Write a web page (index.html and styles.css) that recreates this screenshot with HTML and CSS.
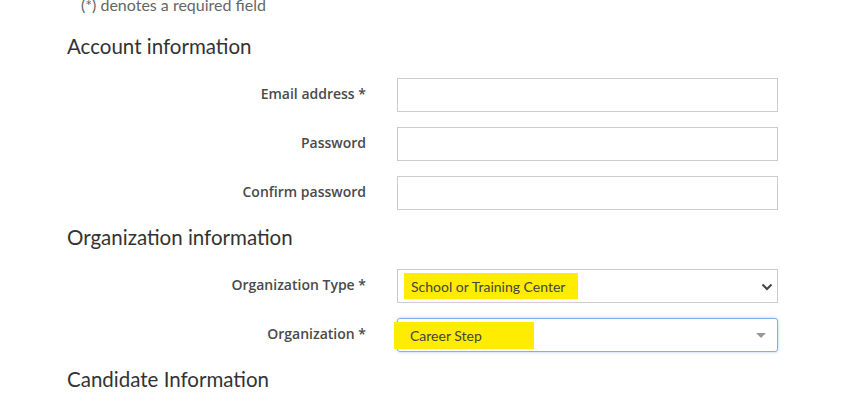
FILE: index.html
```html
<!DOCTYPE html>
<html>
<head>
<meta charset="utf-8">
<link rel="stylesheet" href="styles.css">
</head>
<body>
<div class="page">
  <p class="note">(*) denotes a required field</p>
  <h2 class="section-title">Account information</h2>
  <div class="row"><label class="label">Email address *</label><div class="field"><input class="input" type="text"></div></div>
  <div class="row"><label class="label">Password</label><div class="field"><input class="input" type="password"></div></div>
  <div class="row"><label class="label">Confirm password</label><div class="field"><input class="input" type="password"></div></div>
  <h2 class="section-title org">Organization information</h2>
  <div class="row"><label class="label">Organization Type *</label>
    <div class="field">
      <div class="select">
        <span class="hl hl-type">School or Training Center</span>
        <svg class="chev" width="12" height="8" viewBox="0 0 12 8"><path d="M1.5 1.5 L6 6 L10.5 1.5" fill="none" stroke="#444" stroke-width="2"/></svg>
      </div>
    </div>
  </div>
  <div class="row"><label class="label">Organization *</label>
    <div class="field">
      <div class="select focus">
        <span class="hl hl-org">Career Step</span>
        <svg class="caret" width="10" height="6" viewBox="0 0 10 6"><path d="M0 0 L10 0 L5 5 Z" fill="#999"/></svg>
      </div>
    </div>
  </div>
  <h2 class="section-title cand">Candidate Information</h2>
</div>
</body>
</html>
```

FILE: styles.css
```css
html, body { margin: 0; padding: 0; background: #fff; }
body { font-family: "Lato", "Open Sans", sans-serif; color: #333; }
.page { padding-left: 67px; width: 711px; margin-top: -4px; }
.note { margin: 0 0 0 14px; font-size: 16px; color: #666; line-height: 18px; }
.section-title { margin: 20px 0 20px 0; font-size: 20.5px; font-weight: 400; color: #333; line-height: 24px; }
.section-title.org { margin-top: 13px; margin-bottom: 20px; }
.section-title.cand { margin-top: 12px; }
.row { display: flex; align-items: center; height: 34px; margin-bottom: 15px; }
.label { width: 330px; flex: none; text-align: right; font-family: "Open Sans", sans-serif; font-size: 14px; font-weight: 600; color: #4a4a4a; padding-right: 31px; padding-bottom: 4px; box-sizing: border-box; }
.field { width: 381px; flex: none; }
.input { display: block; width: 100%; height: 34px; box-sizing: border-box; border: 1px solid #ccc; border-radius: 0; padding: 0 10px; margin: 0; outline: none; }
.select { position: relative; display: flex; align-items: center; height: 34px; box-sizing: border-box; border: 1px solid #ccc; padding: 0 6px; }
.select.focus { border-color: #7fb0e6; border-radius: 3px; box-shadow: 0 0 3px rgba(90,150,230,0.5); padding-left: 0; }
.hl { background: #ffec00; font-size: 14px; color: #444; display: flex; align-items: center; height: 26px; }
.hl-type { width: 174px; padding-left: 7px; box-sizing: border-box; }
.hl-org { width: 140px; height: 27px; padding-left: 16px; box-sizing: border-box; margin-left: -4px; }
.chev { position: absolute; right: 4px; top: 13px; }
.caret { position: absolute; right: 11px; top: 14px; }
```
